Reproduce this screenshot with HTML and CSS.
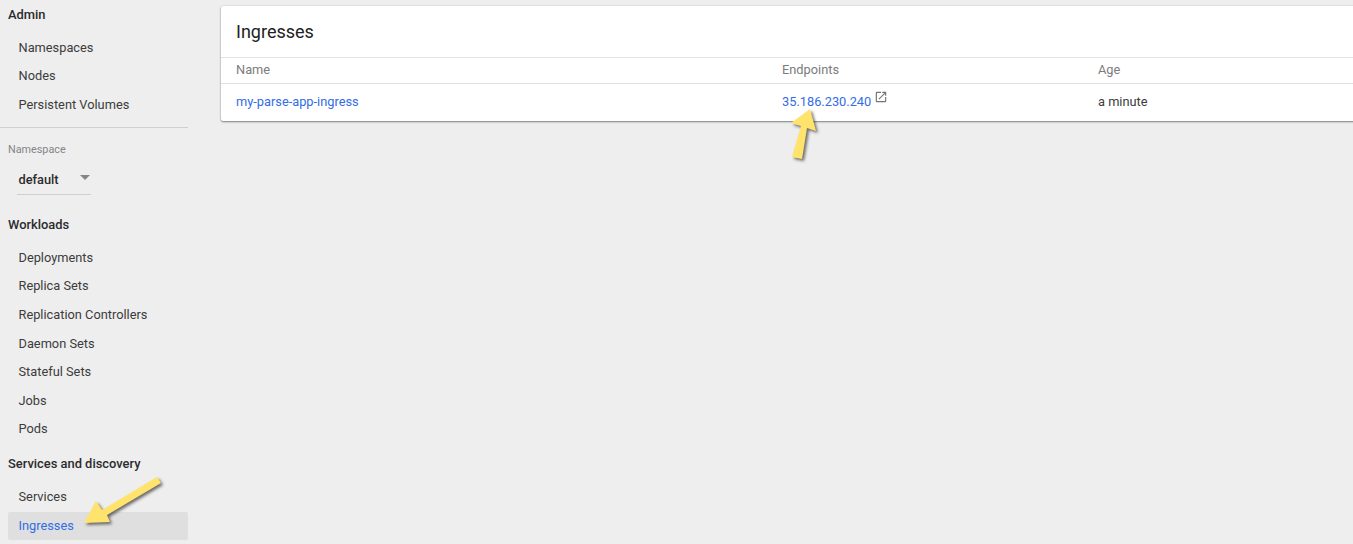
FILE: index.html
```html
<!DOCTYPE html>
<html lang="en">
<head>
<meta charset="utf-8">
<title>Ingresses</title>
<link rel="stylesheet" href="styles.css">
</head>
<body>
<div class="app">
  <nav class="sidebar">
    <h3 class="heading heading-first">Admin</h3>
    <ul class="menu">
      <li class="item">Namespaces</li>
      <li class="item">Nodes</li>
      <li class="item">Persistent Volumes</li>
    </ul>
    <hr class="divider">
    <div class="ns-label">Namespace</div>
    <div class="ns-select"><span>default</span><i class="caret"></i></div>
    <h3 class="heading heading-workloads">Workloads</h3>
    <ul class="menu">
      <li class="item">Deployments</li>
      <li class="item">Replica Sets</li>
      <li class="item">Replication Controllers</li>
      <li class="item">Daemon Sets</li>
      <li class="item">Stateful Sets</li>
      <li class="item">Jobs</li>
      <li class="item">Pods</li>
    </ul>
    <h3 class="heading heading-services">Services and discovery</h3>
    <ul class="menu">
      <li class="item">Services</li>
      <li class="item active">Ingresses</li>
    </ul>
  </nav>
  <main class="content">
    <section class="card">
      <h1 class="card-title">Ingresses</h1>
      <div class="row row-head">
        <div>Name</div>
        <div>Endpoints</div>
        <div>Age</div>
      </div>
      <div class="row row-body">
        <div><a class="link">my-parse-app-ingress</a></div>
        <div class="endpoint"><a class="link">35.186.230.240</a>
          <svg class="ext" viewBox="0 0 24 24" width="14" height="14"><path fill="#757575" d="M19 19H5V5h7V3H5a2 2 0 0 0-2 2v14a2 2 0 0 0 2 2h14a2 2 0 0 0 2-2v-7h-2v7zM14 3v2h3.59l-9.83 9.83 1.41 1.41L19 6.41V10h2V3h-7z"/></svg>
        </div>
        <div class="age">a minute</div>
      </div>
    </section>
  </main>
</div>
<svg class="arrow arrow-up" viewBox="0 0 1353 544" width="1353" height="544"><polygon fill="#ffe36c" points="810,109 816,131 807,128 802,159 792,157 801,126 791,123"/></svg>
<svg class="arrow arrow-left" viewBox="0 0 1353 544" width="1353" height="544"><polygon fill="#ffe36c" points="84,523 96,501 102,510 157,477 161,483 107,515 110,522"/></svg>
</body>
</html>
```
FILE: styles.css
```css
html, body {
  margin: 0;
  height: 100%;
  overflow: hidden;
  background: #eeeeee;
}
body {
  font-family: Roboto, "Liberation Sans", sans-serif;
  font-size: 12.8px;
  color: #212121;
}
.app {
  display: flex;
  height: 544px;
}
.sidebar {
  width: 188px;
  flex: none;
}
.heading {
  margin: 0;
  padding-left: 8px;
  font-size: 12.9px;
  font-weight: 500;
  line-height: 20px;
  color: #2b2b2b;
}
.heading-first {
  margin-top: 5px;
}
.heading-workloads {
  margin-top: 20px;
}
.heading-services {
  margin-top: 10.5px;
}
.menu {
  list-style: none;
  margin: 8.5px 0 0 8px;
  padding: 0;
}
.item {
  height: 28.6px;
  line-height: 28px;
  padding-left: 10.5px;
  color: #3c3c3c;
  font-size: 12.8px;
}
.active {
  color: #326de6;
  background: #dfdfdf;
  border-radius: 2px;
}
.divider {
  margin: 8px 0 0;
  border: 0;
  border-top: 1px solid #d0d0d0;
}
.ns-label {
  margin: 15px 0 0 8px;
  font-size: 10.8px;
  line-height: 14px;
  color: #858585;
}
.ns-select {
  display: flex;
  justify-content: space-between;
  box-sizing: border-box;
  width: 74px;
  height: 30px;
  margin: 8px 0 0 17px;
  padding: 0 0 0 1.5px;
  border-bottom: 1px solid #cfcfcf;
  font-size: 12.8px;
  font-weight: 500;
  line-height: 30px;
  color: #2b2b2b;
}
.caret {
  width: 0;
  height: 0;
  margin: 10px 1px 0 0;
  border-left: 5px solid transparent;
  border-right: 5px solid transparent;
  border-top: 5px solid #858585;
}
.content {
  flex: 1;
  min-width: 0;
  padding: 6px 0 0 33px;
}
.card {
  background: #ffffff;
  margin-right: -4px;
  border-radius: 2px;
  box-shadow: 0 1px 2px rgba(0, 0, 0, 0.45), 0 0 2px rgba(0, 0, 0, 0.12);
}
.card-title {
  margin: 0;
  padding-left: 15px;
  height: 51px;
  font-size: 18px;
  font-weight: 400;
  line-height: 52px;
  color: #212121;
}
.row {
  display: grid;
  grid-template-columns: 546px 316px 1fr;
  padding-left: 15px;
  border-top: 1px solid #e2e2e2;
}
.row-head {
  height: 25px;
  line-height: 24px;
  font-size: 12.8px;
  color: #7c7c7c;
}
.row-body {
  height: 37px;
  line-height: 35px;
  font-size: 12.8px;
}
.link {
  color: #326de6;
}
.endpoint {
  display: flex;
  align-items: flex-start;
  gap: 3px;
}
.ext {
  margin-top: 6px;
}
.age {
  color: #3c3c3c;
}
.arrow {
  position: absolute;
  left: 0;
  top: 0;
  pointer-events: none;
  filter: drop-shadow(2px 2px 1.5px rgba(0, 0, 0, 0.55));
}
```
